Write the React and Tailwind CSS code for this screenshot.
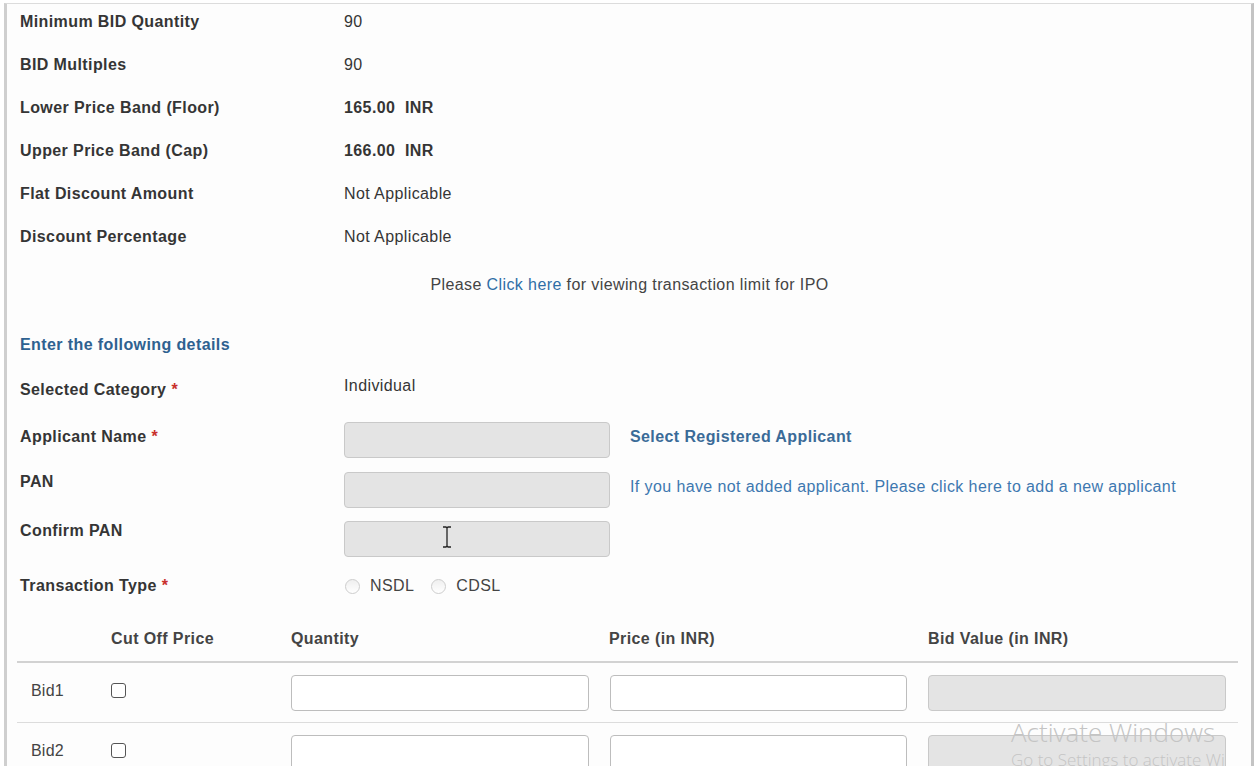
import React from "react";

const font = { fontFamily: '"Liberation Sans", Arial, sans-serif' };

function InfoRow({ label, value, bold }) {
  return (
    <div className="flex h-[43px] items-start">
      <div className="w-[324px] text-[16px] leading-5 font-bold text-[#353535] tracking-[0.4px]">{label}</div>
      <div className={"text-[16px] leading-5 text-[#353535] tracking-[0.4px] " + (bold ? "font-bold" : "")}>{value}</div>
    </div>
  );
}

function Star() {
  return <span className="text-[#c9302c] ml-[5px] font-bold">*</span>;
}

function GrayInput() {
  return <div className="w-[266px] h-[36px] rounded-[4px] border border-[#c9c9c9] bg-[#e4e4e4]" />;
}

function Radio() {
  return (
    <span className="inline-block w-[15px] h-[15px] rounded-full border border-[#cdcdcd] bg-gradient-to-b from-[#efefef] to-[#ffffff]" />
  );
}

function Checkbox() {
  return <span className="inline-block w-[15px] h-[15px] rounded-[3px] border border-[#555] bg-white" />;
}

function BidRow({ name, last }) {
  return (
    <div className={"grid grid-cols-[94px_180px_318px_319px_1fr] items-center pt-[12px] pb-[11px] " + (last ? "" : "border-b border-[#dcdcdc]")}>
      <div className="pl-[14px] -mt-[4px] text-[16px] leading-5 text-[#444] tracking-[0.2px]">{name}</div>
      <div className="flex items-center -mt-[6px]"><Checkbox /></div>
      <div><div className="w-[298px] h-[36px] rounded-[4px] border border-[#bdbdbd] bg-white" /></div>
      <div className="pl-[1px]"><div className="w-[297px] h-[36px] rounded-[4px] border border-[#bdbdbd] bg-white" /></div>
      <div><div className="w-[298px] h-[36px] rounded-[4px] border border-[#c9c9c9] bg-[#e4e4e4]" /></div>
    </div>
  );
}

export default function App() {
  return (
    <div className="relative w-[1255px] h-[766px] overflow-hidden bg-white pt-[3px] pl-[4px]" style={font}>
      <div className="h-[800px] w-[1250px] bg-[#fdfdfd] border-t border-t-[#dcdcdc] border-l-[3px] border-l-[#cfcfcf] border-r-[3px] border-r-[#c4c4c4] pl-[13px] pt-[8px]">
        <InfoRow label="Minimum BID Quantity" value="90" />
        <InfoRow label="BID Multiples" value="90" />
        <InfoRow label="Lower Price Band (Floor)" value={<span>165.00&nbsp; INR</span>} bold />
        <InfoRow label="Upper Price Band (Cap)" value={<span>166.00&nbsp; INR</span>} bold />
        <InfoRow label="Flat Discount Amount" value="Not Applicable" />
        <InfoRow label="Discount Percentage" value="Not Applicable" />

        <div className="mt-[5px] h-5 pr-[12px] text-center text-[16px] leading-5 text-[#444] tracking-[0.4px]">
          Please <span className="text-[#2f6ea6]">Click here</span> for viewing transaction limit for IPO
        </div>

        <div className="mt-[40px] h-5 text-[16px] leading-5 font-bold text-[#2e6190] tracking-[0.4px]">
          Enter the following details
        </div>

        <div className="mt-[25px] flex h-[20px] items-start">
          <div className="w-[324px] text-[16px] leading-5 font-bold text-[#353535] tracking-[0.4px]">
            Selected Category<Star />
          </div>
          <div className="-mt-[4px] text-[16px] leading-5 text-[#353535] tracking-[0.4px]">Individual</div>
        </div>

        <div className="mt-[22px] flex items-start">
          <div className="w-[324px] pt-[5px] text-[16px] leading-5 font-bold text-[#353535] tracking-[0.4px]">
            Applicant Name<Star />
          </div>
          <GrayInput />
          <div className="ml-[20px] pt-[5px] text-[16px] leading-5 font-bold text-[#3a6b98] tracking-[0.4px]">
            Select Registered Applicant
          </div>
        </div>

        <div className="mt-[14px] flex items-start">
          <div className="w-[324px] text-[16px] leading-5 font-bold text-[#353535] tracking-[0.4px]">PAN</div>
          <GrayInput />
          <div className="ml-[20px] pt-[5px] text-[16px] leading-5 text-[#3d78b0] tracking-[0.4px]">
            If you have not added applicant. Please click here to add a new applicant
          </div>
        </div>

        <div className="mt-[13px] flex items-start">
          <div className="w-[324px] text-[16px] leading-5 font-bold text-[#353535] tracking-[0.4px]">Confirm PAN</div>
          <div className="relative">
            <GrayInput />
            <svg className="absolute left-[98px] top-[5px]" width="10" height="22" viewBox="0 0 10 22">
              <path d="M1 1h3l1 1 1-1h3M5 2v18M1 21h3l1-1 1 1h3" stroke="#222" strokeWidth="1.3" fill="none" />
            </svg>
          </div>
        </div>

        <div className="mt-[19px] flex h-5 items-center">
          <div className="w-[325px] text-[16px] leading-5 font-bold text-[#353535] tracking-[0.4px]">
            Transaction Type<Star />
          </div>
          <Radio />
          <span className="ml-[10px] text-[16px] leading-5 text-[#444] tracking-[0.4px]">NSDL</span>
          <span className="ml-[17px] flex"><Radio /></span>
          <span className="ml-[10px] text-[16px] leading-5 text-[#444] tracking-[0.4px]">CDSL</span>
        </div>

        <div className="mt-[33px] -ml-[3px] w-[1221px]">
          <div className="grid grid-cols-[94px_180px_318px_319px_1fr] border-b-2 border-[#d2d2d2] pb-[12px]">
            <div />
            <div className="text-[16px] leading-5 font-bold text-[#444] tracking-[0.4px]">Cut Off Price</div>
            <div className="text-[16px] leading-5 font-bold text-[#444] tracking-[0.4px]">Quantity</div>
            <div className="text-[16px] leading-5 font-bold text-[#444] tracking-[0.4px]">Price (in INR)</div>
            <div className="text-[16px] leading-5 font-bold text-[#444] tracking-[0.4px]">Bid Value (in INR)</div>
          </div>
          <BidRow name="Bid1" />
          <BidRow name="Bid2" last />
        </div>
      </div>

      <div
        className="absolute left-[1011px] top-[716px] text-[26px] leading-[32px] text-[#c4c4c4] whitespace-nowrap"
        style={{ fontFamily: '"Open Sans", "Noto Sans", sans-serif', fontWeight: 300 }}
      >
        Activate Windows
      </div>
      <div className="absolute left-[1011px] top-[749px] w-[244px] h-[17px] overflow-hidden">
        <div
          className="text-[17px] leading-[22px] text-[#c4c4c4] whitespace-nowrap"
          style={{ fontFamily: '"Open Sans", "Noto Sans", sans-serif', fontWeight: 300 }}
        >
          Go to Settings to activate Wi
        </div>
      </div>
    </div>
  );
}
